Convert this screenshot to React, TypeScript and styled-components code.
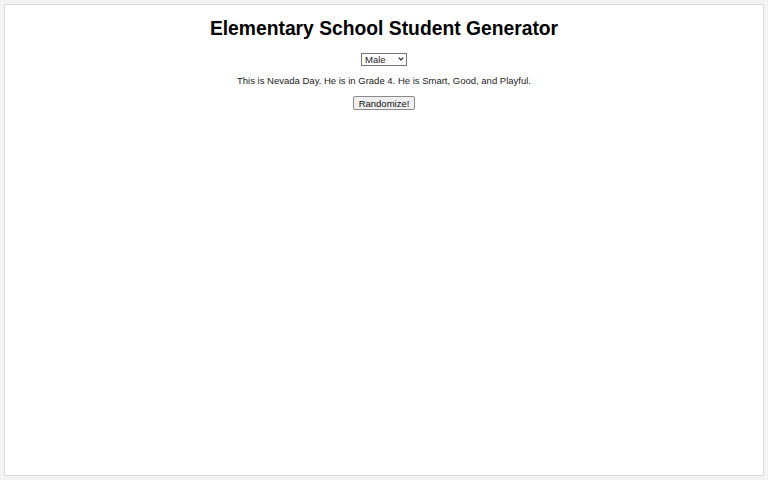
import { useState } from "react"
import styled, { createGlobalStyle } from "styled-components"

const GlobalStyle = createGlobalStyle`
    html, body {
        margin: 0;
        padding: 0;
        height: 100%;
        background: #f2f2f2;
    }
    body {
        font-family: "Liberation Sans", Arial, sans-serif;
        color: #000;
    }
    #root {
        height: 100%;
    }
`

const Page = styled.div`
    box-sizing: border-box;
    height: 100%;
    padding: 4px;
`

const Card = styled.div`
    box-sizing: border-box;
    height: 100%;
    background: #fff;
    border: 1px solid #dcdcdc;
    display: flex;
    flex-direction: column;
    align-items: center;
    padding-top: 13px;
`

const Title = styled.h1`
    margin: 0;
    font-size: 19.3px;
    font-weight: bold;
    line-height: 22px;
`

const SelectWrap = styled.div`
    position: relative;
    margin-top: 13px;
    height: 13px;

    > svg {
        position: absolute;
        right: 3px;
        top: 4px;
        pointer-events: none;
    }
`

const GenderSelect = styled.select`
    box-sizing: border-box;
    appearance: none;
    display: block;
    font-family: inherit;
    font-size: 9.5px;
    line-height: 11px;
    height: 13px;
    width: 46px;
    padding: 0 0 0 3px;
    border: 1px solid #767676;
    border-radius: 0;
    background: #fff;
    color: #222;
    outline: none;
`

const Description = styled.p`
    margin: 9px 0 0;
    font-size: 9.5px;
    line-height: 12px;
    color: #222;
`

const RandomButton = styled.button`
    box-sizing: border-box;
    margin-top: 9px;
    font-family: inherit;
    font-size: 9.5px;
    height: 14px;
    width: 62px;
    padding: 0;
    border: 1px solid #8a8a8a;
    border-radius: 2px;
    background: #efefef;
    color: #111;
`

export default function App() {
    const [gender, setGender] = useState("Male")

    return <>
        <GlobalStyle/>
        <Page>
            <Card>
                <Title>Elementary School Student Generator</Title>
                <SelectWrap>
                    <GenderSelect value={gender} onChange={e => setGender(e.target.value)}>
                        <option>Male</option>
                        <option>Female</option>
                    </GenderSelect>
                    <svg width="6" height="4" viewBox="0 0 6 4">
                        <path d="M0.7 0.7 L3 3 L5.3 0.7" fill="none" stroke="#222" strokeWidth="1.1"/>
                    </svg>
                </SelectWrap>
                <Description>This is Nevada Day. He is in Grade 4. He is Smart, Good, and Playful.</Description>
                <RandomButton>Randomize!</RandomButton>
            </Card>
        </Page>
    </>
}
